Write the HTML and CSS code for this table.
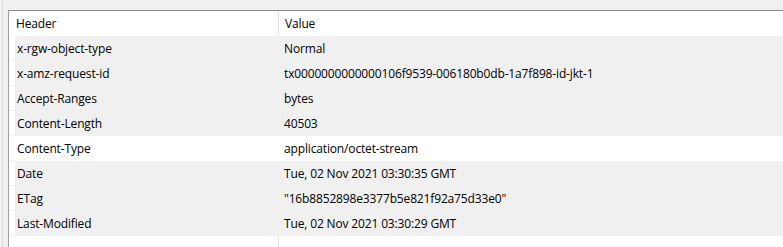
FILE: index.html
```html
<!DOCTYPE html>
<html lang="en">

<head>
    <meta charset="UTF-8">
    <meta name="viewport" content="width=device-width, initial-scale=1.0">
    <title>Response Headers</title>
    <link rel="stylesheet" href="styles.css">
</head>

<body>
    <div class="pane">
        <div class="list">
            <div class="row head">
                <div class="cell">Header</div>
                <div class="cell sep">Value</div>
            </div>
            <div class="row alt">
                <div class="cell">x-rgw-object-type</div>
                <div class="cell">Normal</div>
            </div>
            <div class="row alt">
                <div class="cell">x-amz-request-id</div>
                <div class="cell">tx0000000000000106f9539-006180b0db-1a7f898-id-jkt-1</div>
            </div>
            <div class="row alt">
                <div class="cell">Accept-Ranges</div>
                <div class="cell">bytes</div>
            </div>
            <div class="row alt">
                <div class="cell">Content-Length</div>
                <div class="cell">40503</div>
            </div>
            <div class="row">
                <div class="cell">Content-Type</div>
                <div class="cell">application/octet-stream</div>
            </div>
            <div class="row alt">
                <div class="cell">Date</div>
                <div class="cell">Tue, 02 Nov 2021 03:30:35 GMT</div>
            </div>
            <div class="row alt">
                <div class="cell">ETag</div>
                <div class="cell">"16b8852898e3377b5e821f92a75d33e0"</div>
            </div>
            <div class="row alt">
                <div class="cell">Last-Modified</div>
                <div class="cell">Tue, 02 Nov 2021 03:30:29 GMT</div>
            </div>
            <div class="row filler">
                <div class="cell"></div>
                <div class="cell sep"></div>
            </div>
        </div>
    </div>
</body>

</html>
```

FILE: styles.css
```css
body {
    font-family: "Open Sans", "Noto Sans", Arial, sans-serif;
    font-size: 12px;
    letter-spacing: -0.15px;
    margin: 0;
    padding: 0;
    background-color: #f0f0f0;
    color: #000;
    height: 247px;
    overflow: hidden;
}
.pane {
    padding: 10px 0 0 5px;
    border-left: 1px solid #dcdcdc;
    margin-left: 2px;
    height: 237px;
}
.list {
    background: white;
    border-top: 1px solid #828790;
    border-left: 1px solid #a0a0a0;
    height: 100%;
}
.row {
    display: grid;
    grid-template-columns: 263px 1fr;
    height: 25px;
    margin-left: 6px;
    align-items: center;
    position: relative;
}
/* faint grid line in the left gutter */
.row::before {
    content: "";
    position: absolute;
    left: -6px;
    width: 6px;
    bottom: 0;
    border-bottom: 1px solid #f0f0f0;
}
.head::before {
    display: none;
}
.alt {
    background-color: #f0f0f0;
}
.cell {
    padding-left: 2px;
    white-space: nowrap;
    height: 100%;
    display: flex;
    align-items: center;
}
.cell + .cell {
    padding-left: 6px;
}
.head .cell:first-child {
    padding-left: 1px;
}
.sep {
    border-left: 1px solid #e5e5e5;
}
.filler {
    height: 12px;
}
```
